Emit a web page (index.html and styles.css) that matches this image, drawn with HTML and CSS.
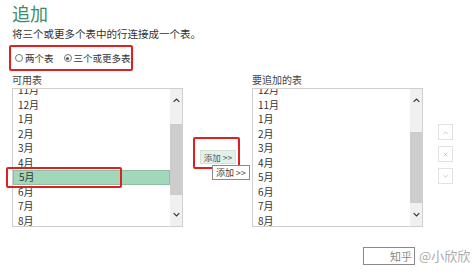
FILE: index.html
```html
<!DOCTYPE html>
<html lang="zh-CN">
<head>
    <meta charset="UTF-8">
    <title>追加</title>
    <link rel="stylesheet" href="styles.css">
</head>
<body>
    <div class="dialog">
        <h1 class="title">追加</h1>
        <p class="desc">将三个或更多个表中的行连接成一个表。</p>

        <div class="mode">
            <label class="radio"><span class="dot"></span>两个表</label>
            <label class="radio"><span class="dot on"></span>三个或更多表</label>
        </div>

        <div class="panes">
            <div class="pane">
                <div class="label">可用表</div>
                <div class="listbox">
                    <div class="view">
                        <ul class="items">
                            <li>11月</li>
                            <li>12月</li>
                            <li>1月</li>
                            <li>2月</li>
                            <li>3月</li>
                            <li>4月</li>
                            <li class="sel">5月</li>
                            <li>6月</li>
                            <li>7月</li>
                            <li>8月</li>
                        </ul>
                    </div>
                    <div class="scroll">
                        <svg class="arrow" viewBox="0 0 10 6"><path d="M1 5 L5 1 L9 5" /></svg>
                        <div class="track"><div class="thumb t-left"></div></div>
                        <svg class="arrow" viewBox="0 0 10 6"><path d="M1 1 L5 5 L9 1" /></svg>
                    </div>
                </div>
                <div class="mark-row"></div>
            </div>

            <div class="mid">
                <div class="mark-btn">
                    <button class="add">添加 &gt;&gt;</button>
                </div>
                <div class="tip">添加 &gt;&gt;</div>
            </div>

            <div class="pane">
                <div class="label">要追加的表</div>
                <div class="listbox">
                    <div class="view">
                        <ul class="items">
                            <li>12月</li>
                            <li>11月</li>
                            <li>1月</li>
                            <li>2月</li>
                            <li>3月</li>
                            <li>4月</li>
                            <li>5月</li>
                            <li>6月</li>
                            <li>7月</li>
                            <li>8月</li>
                        </ul>
                    </div>
                    <div class="scroll">
                        <svg class="arrow" viewBox="0 0 10 6"><path d="M1 5 L5 1 L9 5" /></svg>
                        <div class="track"><div class="thumb t-right"></div></div>
                        <svg class="arrow" viewBox="0 0 10 6"><path d="M1 1 L5 5 L9 1" /></svg>
                    </div>
                </div>
            </div>

            <div class="order">
                <div class="small"><svg viewBox="0 0 10 6"><path d="M2 5 L5 2 L8 5" /></svg></div>
                <div class="small"><svg class="x" viewBox="0 0 10 10"><path d="M2.5 2.5 L7.5 7.5 M7.5 2.5 L2.5 7.5" /></svg></div>
                <div class="small"><svg viewBox="0 0 10 6"><path d="M2 1 L5 4 L8 1" /></svg></div>
            </div>
        </div>

        <div class="footer">
            <span class="ok">知乎</span>
            <span class="wm">@小欣欣</span>
        </div>
    </div>
</body>
</html>
```

FILE: styles.css
```css
body {
    margin: 0;
    background: #ffffff;
    font-family: "Noto Sans CJK SC", "Noto Sans", sans-serif;
    color: #333333;
}
.dialog {
    width: 474px;
    height: 279px;
    padding: 0 0 0 12px;
    box-sizing: border-box;
    overflow: hidden;
}
.title {
    margin: 0;
    padding-top: 1px;
    font-size: 18px;
    line-height: 24px;
    font-weight: normal;
    color: #3d8c69;
}
.desc {
    margin: 2px 0 0;
    font-size: 10.5px;
    line-height: 14px;
    color: #333333;
}
.mode {
    display: flex;
    align-items: center;
    gap: 10px;
    width: 116px;
    height: 22px;
    margin: 4px 0 0 -3px;
    padding-left: 4px;
    border: 2px solid #e02020;
    border-radius: 2px;
    font-size: 9.5px;
}
.radio {
    display: flex;
    align-items: center;
    gap: 2px;
}
.dot {
    width: 6px;
    height: 6px;
    border: 1px solid #777777;
    border-radius: 50%;
    position: relative;
}
.dot.on::after {
    content: "";
    position: absolute;
    left: 1.5px;
    top: 1.5px;
    width: 3px;
    height: 3px;
    border-radius: 50%;
    background: #555555;
}
.panes {
    display: flex;
    margin-top: 2px;
}
.pane {
    position: relative;
}
.label {
    font-size: 10px;
    line-height: 14px;
    height: 14px;
    color: #444444;
}
.listbox {
    display: flex;
    width: 171px;
    height: 139px;
    margin-top: 1px;
    border: 1px solid #cfcfcf;
    box-sizing: border-box;
}
.view {
    flex: 1;
    overflow: hidden;
}
.items {
    margin: -6px 0 0;
    padding: 0;
    list-style: none;
    font-size: 10px;
}
.items li {
    height: 14.5px;
    line-height: 14.5px;
    padding-left: 5px;
}
.items li.sel {
    background: #a2d7ba;
    border: 1px solid #8cbfa3;
    line-height: 12.5px;
    height: 12.5px;
}
.scroll {
    width: 12px;
    display: flex;
    flex-direction: column;
    background: #f0f0f0;
}
.arrow {
    width: 7px;
    height: 5px;
    margin: 9px auto;
    flex: none;
}
.arrow path,
.small path {
    fill: none;
    stroke: #333333;
    stroke-width: 1.6;
}
.track {
    flex: 1;
    position: relative;
}
.thumb {
    position: absolute;
    left: 0;
    right: 0;
    background: #cdcdcd;
}
.t-left {
    top: 12px;
    height: 71px;
}
.t-right {
    top: 20px;
    height: 71px;
}
.mark-row {
    position: absolute;
    left: -6px;
    top: 94px;
    width: 112px;
    height: 17px;
    border: 2px solid #e02020;
    border-radius: 2px;
}
.mid {
    position: relative;
    width: 69px;
    padding-top: 64px;
    box-sizing: border-box;
}
.mark-btn {
    width: 41px;
    height: 25px;
    margin-left: 10px;
    border: 2px solid #e02020;
    border-radius: 2px;
    display: flex;
    align-items: flex-end;
    justify-content: flex-end;
    padding: 0 2px 3px 0;
}
.add {
    width: 36px;
    height: 14px;
    padding: 0;
    font-family: inherit;
    font-size: 8.5px;
    color: #555555;
    background: #e3f1e9;
    border: 1px solid #d2e2d8;
    border-radius: 0;
}
.tip {
    position: absolute;
    left: 29px;
    top: 92px;
    padding: 0 3px;
    height: 13px;
    line-height: 13px;
    font-size: 9px;
    color: #444444;
    background: #ffffff;
    border: 1px solid #8a8a8a;
    white-space: nowrap;
}
.order {
    display: flex;
    flex-direction: column;
    gap: 6px;
    padding: 51px 0 0 15px;
}
.small {
    width: 13px;
    height: 14px;
    border: 1px solid #e2e2e2;
    display: flex;
    align-items: center;
    justify-content: center;
}
.small svg {
    width: 7px;
    height: 5px;
}
.small svg.x {
    height: 7px;
}
.small path {
    stroke: #b8b8b8;
    stroke-width: 1;
}
.footer {
    display: flex;
    align-items: center;
    gap: 4px;
    margin: 19px 0 0 351px;
}
.ok {
    width: 48px;
    height: 16px;
    border: 1px solid #8a8a8a;
    font-size: 11px;
    line-height: 16px;
    text-align: right;
    padding-right: 2px;
    box-sizing: content-box;
    color: #888888;
}
.wm {
    font-size: 13px;
    color: #aaaaaa;
}
```
